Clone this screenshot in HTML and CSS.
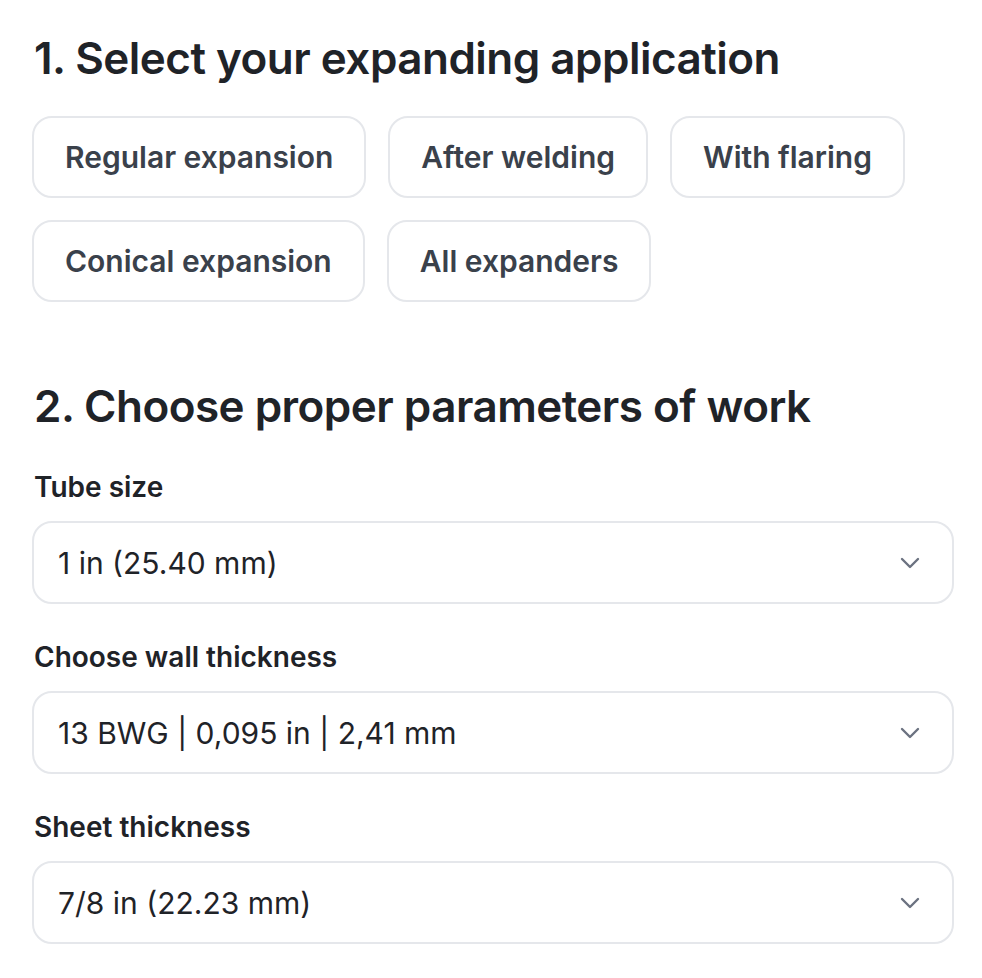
FILE: index.html
```html
<!DOCTYPE html>
<html lang="en">
<head>
<meta charset="utf-8">
<title>Expander selector</title>
<link rel="stylesheet" href="styles.css">
</head>
<body>
<div class="selector">

<h2 class="step">1. Select your expanding application</h2>
<div class="apps">
<button class="app">Regular expansion</button>
<button class="app">After welding</button>
<button class="app">With flaring</button>
<button class="app">Conical expansion</button>
<button class="app">All expanders</button>
</div>

<h2 class="step step-params">2. Choose proper parameters of work</h2>

<div class="field">
<label class="field-label">Tube size</label>
<div class="dropdown">
<span>1 in (25.40 mm)</span>
<svg class="chevron" viewBox="0 0 20 12" width="20" height="12"><path d="M2 2l8 8 8-8" fill="none" stroke="currentColor" stroke-width="2.4" stroke-linecap="round" stroke-linejoin="round"/></svg>
</div>
</div>

<div class="field">
<label class="field-label">Choose wall thickness</label>
<div class="dropdown">
<span>13 BWG | 0,095 in | 2,41 mm</span>
<svg class="chevron" viewBox="0 0 20 12" width="20" height="12"><path d="M2 2l8 8 8-8" fill="none" stroke="currentColor" stroke-width="2.4" stroke-linecap="round" stroke-linejoin="round"/></svg>
</div>
</div>

<div class="field">
<label class="field-label">Sheet thickness</label>
<div class="dropdown">
<span>7/8 in (22.23 mm)</span>
<svg class="chevron" viewBox="0 0 20 12" width="20" height="12"><path d="M2 2l8 8 8-8" fill="none" stroke="currentColor" stroke-width="2.4" stroke-linecap="round" stroke-linejoin="round"/></svg>
</div>
</div>

</div>
</body>
</html>
```

FILE: styles.css
```css
body {
 margin: 0;
 background: #fff;
 font-family: Inter, "Noto Sans", sans-serif;
 color: #1f2328;
}

.selector {
 width: 922px;
 padding: 30px 0 0 32px;
}

h2.step {
 font-size: 44px;
 font-weight: 600;
 line-height: 56px;
 margin: 0 0 2px 2px;
 letter-spacing: -0.52px;
}

h2.step-params {
 margin-top: 76px;
 margin-bottom: 37px;
}

.apps {
 display: flex;
 flex-wrap: wrap;
 gap: 22px;
 margin-top: 30px;
 width: 900px;
}

.app {
 font-family: inherit;
 font-size: 30px;
 font-weight: 600;
 color: #3a414b;
 background: #fff;
 border: 2px solid #e5e7eb;
 border-radius: 20px;
 height: 82px;
 padding: 0 31px;
}

.field {
 margin-bottom: 37px;
}

.field-label {
 display: block;
 font-size: 28px;
 font-weight: 600;
 line-height: 32px;
 margin: 0 0 18px 2px;
}

.dropdown {
 display: flex;
 align-items: center;
 justify-content: space-between;
 height: 83px;
 box-sizing: border-box;
 border: 2px solid #e5e7eb;
 border-radius: 20px;
 padding: 0 32px 0 24px;
 font-size: 30px;
 color: #1f2328;
}

.chevron {
 color: #6b7280;
}
```
